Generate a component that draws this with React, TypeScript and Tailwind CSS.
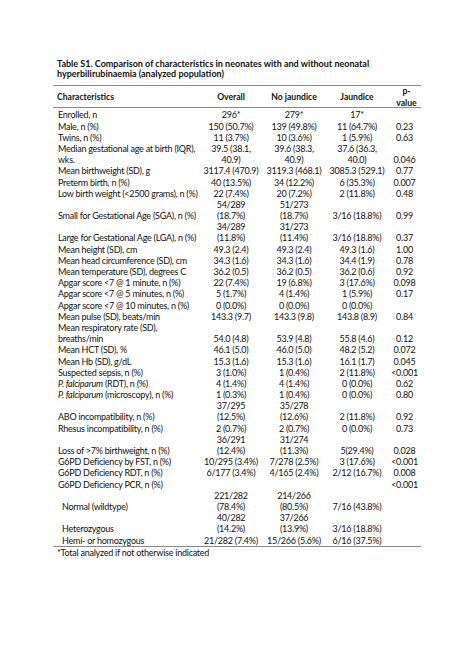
import React from "react";

type Row = {
  label: React.ReactNode[];
  o?: string[];
  n?: string[];
  j?: string[];
  p?: string;
  indent?: boolean;
};

const rows: Row[] = [
  { label: ["Enrolled, n"], o: ["296*"], n: ["279*"], j: ["17*"] },
  { label: ["Male, n (%)"], o: ["150 (50.7%)"], n: ["139 (49.8%)"], j: ["11 (64.7%)"], p: "0.23" },
  { label: ["Twins, n (%)"], o: ["11 (3.7%)"], n: ["10 (3.6%)"], j: ["1 (5.9%)"], p: "0.63" },
  {
    label: ["Median gestational age at birth (IQR),", "wks."],
    o: ["39.5 (38.1,", "40.9)"],
    n: ["39.6 (38.3,", "40.9)"],
    j: ["37.6 (36.3,", "40.0)"],
    p: "0.046",
  },
  { label: ["Mean birthweight (SD), g"], o: ["3117.4 (470.9)"], n: ["3119.3 (468.1)"], j: ["3085.3 (529.1)"], p: "0.77" },
  { label: ["Preterm birth, n (%)"], o: ["40 (13.5%)"], n: ["34 (12.2%)"], j: ["6 (35.3%)"], p: "0.007" },
  { label: ["Low birth weight (<2500 grams), n (%)"], o: ["22 (7.4%)"], n: ["20 (7.2%)"], j: ["2 (11.8%)"], p: "0.48" },
  {
    label: ["Small for Gestational Age (SGA), n (%)"],
    o: ["54/289", "(18.7%)"],
    n: ["51/273", "(18.7%)"],
    j: ["3/16 (18.8%)"],
    p: "0.99",
  },
  {
    label: ["Large for Gestational Age (LGA), n (%)"],
    o: ["34/289", "(11.8%)"],
    n: ["31/273", "(11.4%)"],
    j: ["3/16 (18.8%)"],
    p: "0.37",
  },
  { label: ["Mean height (SD), cm"], o: ["49.3 (2.4)"], n: ["49.3 (2.4)"], j: ["49.3 (1.6)"], p: "1.00" },
  { label: ["Mean head circumference (SD), cm"], o: ["34.3 (1.6)"], n: ["34.3 (1.6)"], j: ["34.4 (1.9)"], p: "0.78" },
  { label: ["Mean temperature (SD), degrees C"], o: ["36.2 (0.5)"], n: ["36.2 (0.5)"], j: ["36.2 (0.6)"], p: "0.92" },
  { label: ["Apgar score <7 @ 1 minute, n (%)"], o: ["22 (7.4%)"], n: ["19 (6.8%)"], j: ["3 (17.6%)"], p: "0.098" },
  { label: ["Apgar score <7 @ 5 minutes, n (%)"], o: ["5 (1.7%)"], n: ["4 (1.4%)"], j: ["1 (5.9%)"], p: "0.17" },
  { label: ["Apgar score <7 @ 10 minutes, n (%)"], o: ["0 (0.0%)"], n: ["0 (0.0%)"], j: ["0 (0.0%)"] },
  { label: ["Mean pulse (SD), beats/min"], o: ["143.3 (9.7)"], n: ["143.3 (9.8)"], j: ["143.8 (8.9)"], p: "0.84" },
  {
    label: ["Mean respiratory rate (SD),", "breaths/min"],
    o: ["54.0 (4.8)"],
    n: ["53.9 (4.8)"],
    j: ["55.8 (4.6)"],
    p: "0.12",
  },
  { label: ["Mean HCT (SD), %"], o: ["46.1 (5.0)"], n: ["46.0 (5.0)"], j: ["48.2 (5.2)"], p: "0.072" },
  { label: ["Mean Hb (SD), g/dL"], o: ["15.3 (1.6)"], n: ["15.3 (1.6)"], j: ["16.1 (1.7)"], p: "0.045" },
  { label: ["Suspected sepsis, n (%)"], o: ["3 (1.0%)"], n: ["1 (0.4%)"], j: ["2 (11.8%)"], p: "<0.001" },
  {
    label: [
      <span key="a">
        <i>P. falciparum</i> (RDT), n (%)
      </span>,
    ],
    o: ["4 (1.4%)"],
    n: ["4 (1.4%)"],
    j: ["0 (0.0%)"],
    p: "0.62",
  },
  {
    label: [
      <span key="b">
        <i>P. falciparum</i> (microscopy), n (%)
      </span>,
    ],
    o: ["1 (0.3%)"],
    n: ["1 (0.4%)"],
    j: ["0 (0.0%)"],
    p: "0.80",
  },
  {
    label: ["ABO incompatibility, n (%)"],
    o: ["37/295", "(12.5%)"],
    n: ["35/278", "(12.6%)"],
    j: ["2 (11.8%)"],
    p: "0.92",
  },
  { label: ["Rhesus incompatibility, n (%)"], o: ["2 (0.7%)"], n: ["2 (0.7%)"], j: ["0 (0.0%)"], p: "0.73" },
  {
    label: ["Loss of >7% birthweight, n (%)"],
    o: ["36/291", "(12.4%)"],
    n: ["31/274", "(11.3%)"],
    j: ["5(29.4%)"],
    p: "0.028",
  },
  { label: ["G6PD Deficiency by FST, n (%)"], o: ["10/295 (3.4%)"], n: ["7/278 (2.5%)"], j: ["3 (17.6%)"], p: "<0.001" },
  { label: ["G6PD Deficiency RDT, n (%)"], o: ["6/177 (3.4%)"], n: ["4/165 (2.4%)"], j: ["2/12 (16.7%)"], p: "0.008" },
  { label: ["G6PD Deficiency PCR, n (%)"], p: "<0.001" },
  {
    label: ["Normal (wildtype)"],
    indent: true,
    o: ["221/282", "(78.4%)"],
    n: ["214/266", "(80.5%)"],
    j: ["7/16 (43.8%)"],
  },
  {
    label: ["Heterozygous"],
    indent: true,
    o: ["40/282", "(14.2%)"],
    n: ["37/266", "(13.9%)"],
    j: ["3/16 (18.8%)"],
  },
  {
    label: ["Hemi- or homozygous"],
    indent: true,
    o: ["21/282 (7.4%)"],
    n: ["15/266 (5.6%)"],
    j: ["6/16 (37.5%)"],
  },
];

function Lines({ items }: { items?: React.ReactNode[] }) {
  if (!items) return <div />;
  return (
    <>
      {items.map((t, i) => (
        <div key={i} className="whitespace-nowrap">
          {t}
        </div>
      ))}
    </>
  );
}

export default function App() {
  return (
    <div
      className="w-[474px] h-[670px] bg-white text-[#111] overflow-hidden pt-[59px] pl-[53px]"
      style={{ fontFamily: "Lato, 'Open Sans', sans-serif" }}
    >
      <div className="w-[368px]">
        <div className="pl-[4px] font-bold text-[9px] leading-[10.2px] whitespace-nowrap">
          <div>Table S1. Comparison of characteristics in neonates with and without neonatal</div>
          <div>hyperbilirubinaemia (analyzed population)</div>
        </div>
        <div className="mt-[6px] border-t border-[#8a8a8a]" />
        <div className="grid grid-cols-[147px_62px_64px_62px_33px] items-center h-[21px] font-bold text-[8.6px] leading-[11.4px]">
          <div className="pl-[4px]">Characteristics</div>
          <div className="text-center">Overall</div>
          <div className="text-center">No jaundice</div>
          <div className="text-center">Jaundice</div>
          <div className="text-center pl-[4px]">
            <div>p-</div>
            <div>value</div>
          </div>
        </div>
        <div className="border-t border-[#8a8a8a]" />
        <div className="pt-[1px] text-[9px] leading-[11.18px] tracking-[-0.25px]">
          {rows.map((r, i) => (
            <div key={i} className="grid grid-cols-[147px_62px_64px_62px_33px] items-end">
              <div className={r.indent ? "pl-[9px]" : "pl-[5px]"}>
                <Lines items={r.label} />
              </div>
              <div className="text-center">
                <Lines items={r.o} />
              </div>
              <div className="text-center">
                <Lines items={r.n} />
              </div>
              <div className="text-center">
                <Lines items={r.j} />
              </div>
              <div className="text-center">{r.p ? <div className="whitespace-nowrap">{r.p}</div> : null}</div>
            </div>
          ))}
        </div>
        <div className="border-t border-[#8a8a8a]" />
        <div className="pl-[4px] text-[9px] leading-[11px] tracking-[-0.25px]">*Total analyzed if not otherwise indicated</div>
      </div>
    </div>
  );
}
